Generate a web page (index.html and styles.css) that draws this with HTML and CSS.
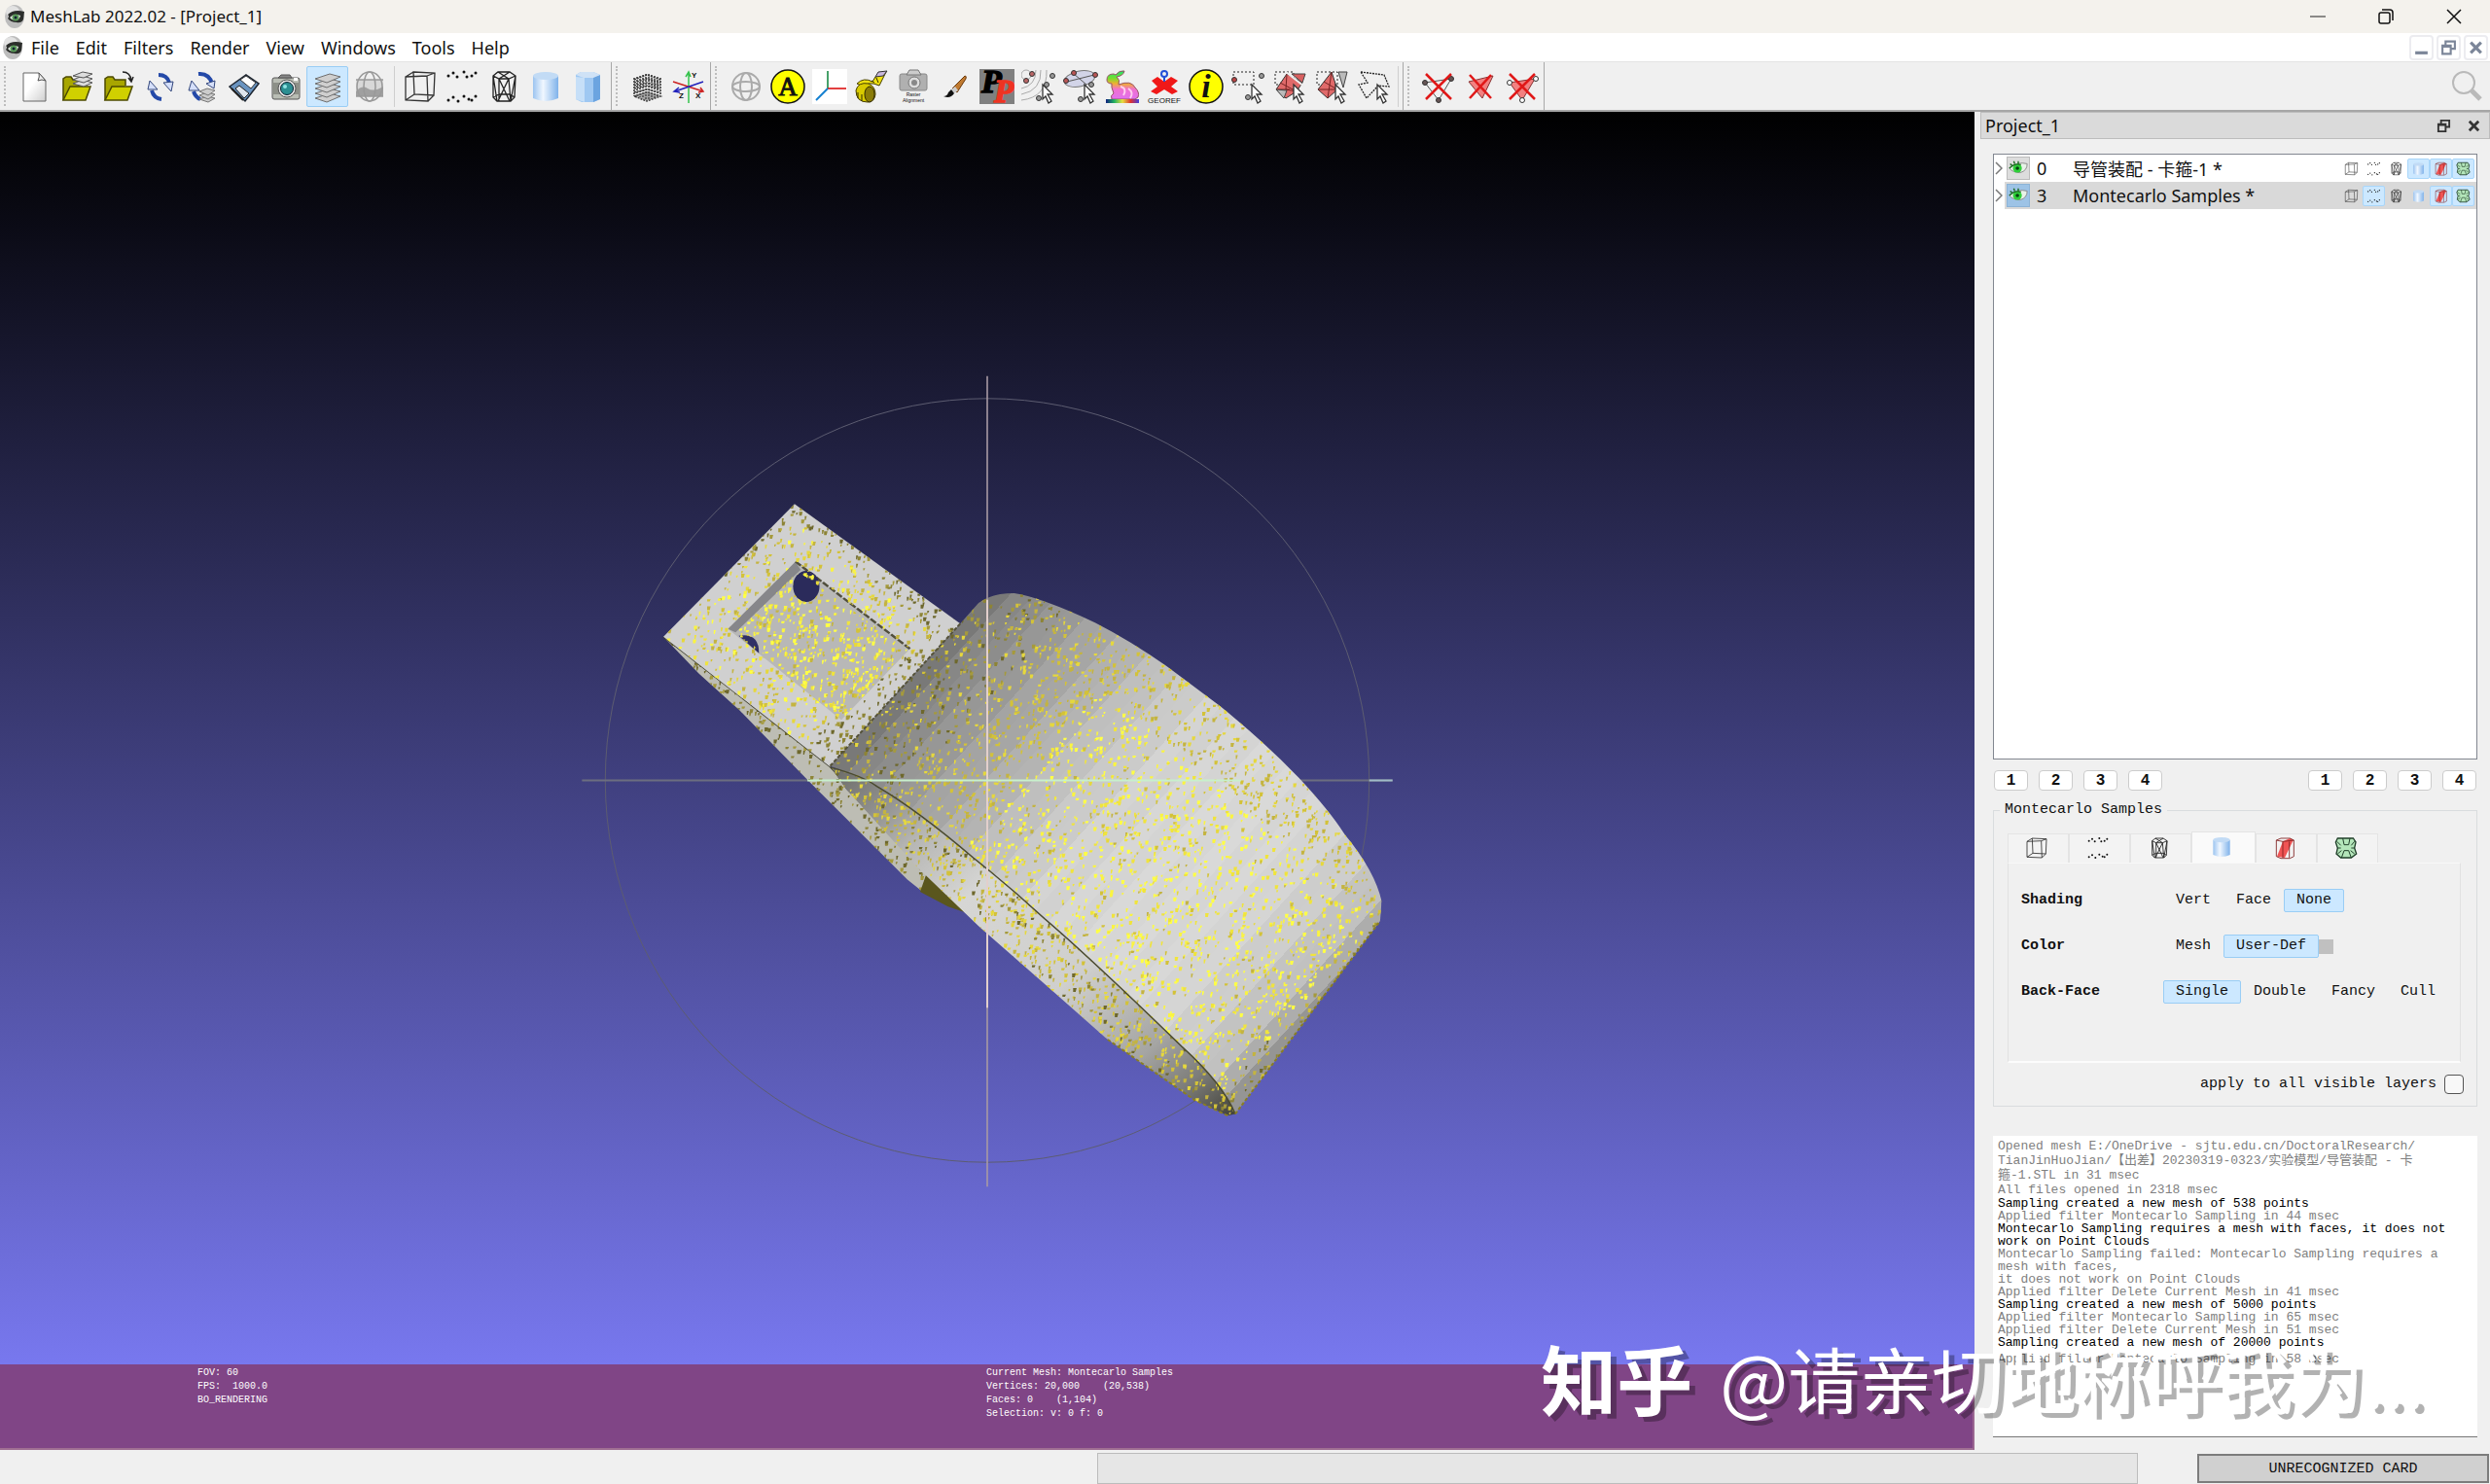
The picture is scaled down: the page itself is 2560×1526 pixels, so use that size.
FILE: index.html
```html
<!DOCTYPE html>
<html lang="en">
<head>
<meta charset="utf-8">
<title>MeshLab 2022.02 - [Project_1]</title>
<link rel="stylesheet" href="styles.css">
</head>
<body>
<svg class="sprite" width="0" height="0" aria-hidden="true">
  <defs>
    <linearGradient id="cyl"><stop offset="0" stop-color="#9cc4f0"/><stop offset=".4" stop-color="#f0f7ff"/><stop offset="1" stop-color="#7fb2ea"/></linearGradient>
    <linearGradient id="paper" x2="1" y2="1"><stop offset=".4" stop-color="#fff"/><stop offset="1" stop-color="#cfcfcf"/></linearGradient>
    <linearGradient id="rainbow"><stop offset="0" stop-color="#102080"/><stop offset=".25" stop-color="#20b060"/><stop offset=".5" stop-color="#e8e040"/><stop offset=".75" stop-color="#e03030"/><stop offset="1" stop-color="#4040e0"/></linearGradient>
    <linearGradient id="bunnyfill" x2="0" y2="1"><stop offset="0" stop-color="#20e070"/><stop offset=".25" stop-color="#70e030"/><stop offset=".45" stop-color="#f0b030"/><stop offset=".65" stop-color="#f070d0"/><stop offset="1" stop-color="#e070f0"/></linearGradient>
    <symbol id="i-logo" viewBox="0 0 22 24"><ellipse cx="11" cy="12" rx="10" ry="12" fill="#bdbdbd"/><ellipse cx="9" cy="7" rx="7" ry="6" fill="#e2e2e2"/><path d="M4 10Q10 4 21 7L20 15Q18 19 13 18Q7 18 4 14Q6 12 4 10Z" fill="#2b2e2b"/><path d="M6 13Q10 8 17 11Q16 16 11 16Q8 16 6 13Z" fill="#dde5dd"/><circle cx="12" cy="13" r="3.500" fill="#5a9a58"/><circle cx="12" cy="13" r="1.500" fill="#123"/></symbol>
    <symbol id="i-new" viewBox="0 0 36 36"><path d="M6 4H22L29 12V33H6Z" fill="url(#paper)" stroke="#666"/><path d="M22 4L29 12Q25 10 21 12Q23 8 22 4Z" fill="#eee" stroke="#555"/></symbol>
    <symbol id="i-folder" viewBox="0 0 36 36"><path d="M4 32V10L7 8H12L14 11H25V17" fill="#a8a600" stroke="#4c4a00" stroke-width="1.500"/><path d="M4 32L11 18H32L27 32Z" fill="#d0d000" stroke="#4c4a00" stroke-width="1.500"/></symbol>
    <symbol id="i-openproj" viewBox="0 0 36 36"><use href="#i-folder"/><g fill="#ddd" stroke="#555"><path d="M14 15L24 11L34 14L25 18Z"/><path d="M14 11L24 7L34 10L25 14Z"/><path d="M14 7L24 3L34 5L25 9Z"/></g></symbol>
    <symbol id="i-open" viewBox="0 0 36 36"><use href="#i-folder"/><path d="M22 3Q30 3 31 12M28 9L31 13L33 8" fill="none" stroke="#222" stroke-width="1.500"/></symbol>
    <symbol id="i-reload" viewBox="0 0 36 36"><path d="M16 6Q25 6 27 14M19 31Q11 30 9 22" fill="none" stroke="#2449a8" stroke-width="4"/><g fill="#d5dffa" stroke="#33477c"><path d="M5 21L7 12L15 21Z"/><path d="M31 13L29 23L21 14Z"/></g></symbol>
    <symbol id="i-reloadall" viewBox="0 0 36 36"><path d="M14 5Q25 4 28 15M16 31Q11 29 9 23" fill="none" stroke="#2449a8" stroke-width="4"/><g fill="#d5dffa" stroke="#33477c"><path d="M4 22L7 12L15 22Z"/><path d="M31 12L30 20L22 15Z"/></g><g fill="#ccc" stroke="#777"><path d="M15 31L23 28L31 30L24 34Z"/><path d="M15 27L23 24L31 26L24 31Z"/><path d="M15 23L23 20L31 22L24 27Z"/></g></symbol>
    <symbol id="i-save" viewBox="0 0 36 36"><path d="M3 18L20 6L33 15L19 33Z" fill="#6a94c0" stroke="#1d2530" stroke-width="1.500"/><path d="M14 11L20 7L30 14L25 20Z" fill="#fff" stroke="#333"/><path d="M9 20L13 17L23 25L18 30Z" fill="#dfe6ee" stroke="#222"/><path d="M5 20L17 32" stroke="#222" stroke-width="2"/></symbol>
    <symbol id="i-camera" viewBox="0 0 36 36"><rect x="4" y="9" width="28" height="22" rx="2" fill="#b9bdb4" stroke="#555"/><path d="M10 9L13 6H22L24 9Z" fill="#888" stroke="#555"/><rect x="4" y="14" width="28" height="12" fill="#8d9088"/><circle cx="19" cy="20" r="9" fill="#e5e5e5" stroke="#555"/><circle cx="19" cy="20" r="6.500" fill="#2c8f92" stroke="#123"/><circle cx="17" cy="18" r="2" fill="#8fe3e3"/><rect x="26" y="9" width="4" height="3" fill="#fff"/></symbol>
    <symbol id="i-layers" viewBox="0 0 36 36"><g fill="#cfcfcf" stroke="#6f6f6f"><path d="M5 30L20 25L31 28L17 34Z"/><path d="M5 25L20 20L31 23L17 29Z"/><path d="M5 20L20 15L31 18L17 24Z"/><path d="M5 15L20 10L31 13L17 19Z"/><path d="M5 10L20 5L31 8L17 14Z"/></g></symbol>
    <symbol id="i-raster" viewBox="0 0 36 36"><path d="M4 11H32V28H4Z" fill="#d8d8d8"/><path d="M4 23Q10 16 16 20T32 18V28H4Z" fill="#a0a0a0"/><g fill="none" stroke="#999" stroke-width="1.500"><ellipse cx="18" cy="18" rx="13" ry="15"/><ellipse cx="18" cy="18" rx="6" ry="15"/><path d="M4 11H32M4 28H32"/></g></symbol>
    <symbol id="i-cube" viewBox="0 0 36 36"><g fill="none" stroke="#333" stroke-width="1.300"><path d="M3 8L25 7L26 33L3 32ZM11 3L33 4L32 27L12 26ZM3 8L11 3M25 7L33 4M26 33L32 27M3 32L12 26"/></g></symbol>
    <symbol id="i-points" viewBox="0 0 36 36"><g fill="#111"><circle cx="4" cy="7" r="1.500"/><circle cx="9" cy="4" r="1.500"/><circle cx="13" cy="8" r="1.500"/><circle cx="20" cy="3" r="1.500"/><circle cx="23" cy="8" r="1.500"/><circle cx="28" cy="7" r="1.500"/><circle cx="32" cy="4" r="1.500"/><circle cx="4" cy="32" r="1.500"/><circle cx="9" cy="29" r="1.500"/><circle cx="14" cy="33" r="1.500"/><circle cx="20" cy="28" r="1.500"/><circle cx="25" cy="31" r="1.500"/><circle cx="28" cy="32" r="1.500"/><circle cx="32" cy="28" r="1.500"/></g></symbol>
    <symbol id="i-wire" viewBox="0 0 36 36"><g fill="none" stroke="#222" stroke-width="1.300"><path d="M7 7L12 3L24 3L30 7L29 29L25 33L11 33L7 29ZM7 7L13 10L23 10L30 7M7 29L13 26L24 26L29 29M13 10V33M23 10L25 33M13 10L24 33M23 10L12 33M7 7L11 33M30 7L25 33M12 3L23 10M24 3L13 10"/></g></symbol>
    <symbol id="i-smooth" viewBox="0 0 36 36"><path d="M5 7V30Q18 36 31 30V7Z" fill="url(#cyl)"/><ellipse cx="18" cy="7" rx="13" ry="4" fill="#c2dbf5"/></symbol>
    <symbol id="i-flat" viewBox="0 0 36 36"><path d="M6 6L11 3H24L31 6V31L24 34H12L6 31Z" fill="#9fc8f2"/><path d="M6 8L15 9V34L6 31Z" fill="#c6dff8"/><path d="M24 8L31 6V31L24 34Z" fill="#6ba4e0"/><path d="M6 6L11 3H24L31 6L24 9H14Z" fill="#cfe2f6"/></symbol>
    <symbol id="i-redcyl" viewBox="0 0 36 36"><path d="M15 8L26 3L31 6L18 33L6 31Z" fill="#f05454"/><g fill="none" stroke="#802020" stroke-width="1.300"><path d="M5 6L12 3H26L32 6V31L26 34H12L5 31ZM5 6L15 8L32 6M15 8V33M25 8V33"/></g></symbol>
    <symbol id="i-green" viewBox="0 0 36 36"><path d="M5 3H29L33 9L31 18L34 27L26 33H10L3 27L5 18L2 9Z" fill="#b4e6ba" stroke="#21402a" stroke-width="2"/><path d="M13 3L15 13H22L24 3M11 33L15 22H22L26 33M5 18H10M26 18H31M4 8L10 14M31 8L26 14M5 27L11 22M31 27L25 22" fill="none" stroke="#21402a" stroke-width="1.500"/></symbol>
    <symbol id="i-grid" viewBox="0 0 36 36"><g fill="none" stroke="#333" stroke-width="1.500" stroke-dasharray="2 1"><path d="M5 9V28M8 8V28M11 7V29M14 6V30M17 5V32M20 5V32M23 6V31M26 7V30M29 8V28M32 9V27M5 11L18 6L32 11M5 14L18 10L32 14M5 17L18 14L32 17M5 20L18 17L32 20M5 24L18 21L32 24M5 28L18 24L32 28L18 33Z"/></g><path d="M5 27L18 23L32 27L18 33Z" fill="#6668"/></symbol>
    <symbol id="i-axes" viewBox="0 0 36 36"><g fill="none" stroke-width="1.500"><path d="M18 35V4M15 8L18 3L20 8" stroke="#35c24c"/><path d="M2 13L33 23M28 24L33 23L30 19" stroke="#c22"/><path d="M33 13L4 23M8 19L3 23L9 24" stroke="#22b"/></g><g font-family="Liberation Sans" font-weight="bold" font-size="8" fill="#111"><text x="21" y="9">Y</text><text x="8" y="30">Z</text><text x="25" y="30">X</text></g></symbol>
    <symbol id="i-globe" viewBox="0 0 36 36"><g fill="none" stroke="#aaa" stroke-width="2"><circle cx="18" cy="18" r="14"/><ellipse cx="18" cy="18" rx="6" ry="14"/><ellipse cx="18" cy="18" rx="14" ry="5"/></g></symbol>
    <symbol id="i-a" viewBox="0 0 36 36"><circle cx="18" cy="18" r="17" fill="#ff0" stroke="#111" stroke-width="1.500"/><text x="18" y="27" text-anchor="middle" font-family="Liberation Serif" font-size="27" fill="#111" stroke="#111">A</text></symbol>
    <symbol id="i-triad" viewBox="0 0 36 36"><path d="M0 0H36V36H0Z" fill="#fff"/><g fill="none" stroke-width="1.600"><path d="M16 2V20" stroke="#198a45"/><path d="M16 20H35" stroke="#d11"/><path d="M16 20L4 32" stroke="#1580d0" stroke-width="2"/></g></symbol>
    <symbol id="i-tape" viewBox="0 0 36 36"><path d="M22 8L33 3L26 17Q15 12 10 18L3 15Q10 8 19 13Z" fill="#eee010" stroke="#443c00"/><path d="M25 3L34 2L30 7L22 8Z" fill="#c9b8dc" stroke="#333"/><path d="M2 22Q4 13 15 15Q22 18 22 26Q21 34 14 34Q2 34 2 22Z" fill="#d8ca00" stroke="#443c00"/><ellipse cx="16" cy="26" rx="5" ry="8" fill="#8a7c08" stroke="#332c00"/><path d="M4 24V30M8 26V33M18 12L21 14M23 9L25 14" stroke="#332c00"/></symbol>
    <symbol id="i-align" viewBox="0 0 36 36"><rect x="4" y="5" width="28" height="17" rx="2" fill="#b0b0b0" stroke="#888"/><path d="M11 6L14 1H23L26 6Z" fill="#ccc" stroke="#777"/><circle cx="19" cy="14" r="6" fill="#ddd" stroke="#777"/><circle cx="19" cy="14" r="3" fill="#888"/><g font-family="Liberation Sans" font-size="5" text-anchor="middle" fill="#111"><text x="18" y="28">Raster</text><text x="18" y="34">Alignment</text></g></symbol>
    <symbol id="i-brush" viewBox="0 0 36 36"><path d="M15 20L28 7Q30 7 29 10L20 24Z" fill="#c07a30" stroke="#6b3c10"/><path d="M14 21L18 18L21 22L17 25Z" fill="#ccc"/><path d="M17 25Q13 31 6 28Q10 28 11 24L14 21Z" fill="#111"/></symbol>
    <symbol id="i-pp" viewBox="0 0 36 36"><path d="M0 0H36V36H0Z" fill="#808080"/><g font-family="Liberation Serif" font-style="italic" font-weight="bold" stroke-width="1.500"><text x="2" y="24" font-size="34" fill="#000" stroke="#000">P</text><text x="15" y="34" font-size="33" fill="#e32" stroke="#e32">P</text></g></symbol>
    <symbol id="i-arrow" viewBox="0 0 36 36"><path d="M22 16L32 26H27L31 33L28 35L25 28L22 31Z" fill="#fff" stroke="#333" stroke-width="1.300"/></symbol>
    <symbol id="i-ptsel" viewBox="0 0 36 36"><g fill="none" stroke="#aaa"><circle cx="5" cy="6" r="5"/><path d="M15 1Q15 17 0 20M20 1Q21 22 0 26M26 1Q27 29 0 32"/></g><g stroke="#333" fill="#999"><circle cx="32" cy="7" r="2.500"/><circle cx="26" cy="16" r="2.500"/><circle cx="18" cy="30" r="2.500"/><circle cx="11" cy="5" r="2.500" fill="#b66"/><circle cx="5" cy="12" r="2.500" fill="#b66"/></g><use href="#i-arrow"/></symbol>
    <symbol id="i-planesel" viewBox="0 0 36 36"><ellipse cx="17" cy="10" rx="16" ry="8" transform="rotate(-12 17 10)" fill="#d2d4e8" stroke="#777"/><path d="M4 13L32 6M11 5L24 16" stroke="#555"/><g stroke="#333" fill="#999"><circle cx="29" cy="16" r="2.500"/><circle cx="18" cy="31" r="2.500"/><g fill="#b55"><circle cx="11" cy="4" r="2.500"/><circle cx="33" cy="6" r="2.500"/><circle cx="3" cy="12" r="2.500"/></g></g><use href="#i-arrow"/></symbol>
    <symbol id="i-bunny" viewBox="0 0 36 36"><path d="M2 11Q2 5 9 5L11 6Q15 1 20 2Q19 7 12 8Q16 11 14 16Q27 11 31 19Q36 24 34 29L31 31H7Q5 27 9 25Q6 18 7 15Q2 15 2 11Z" fill="url(#bunnyfill)" stroke="#956"/><path d="M16 18Q23 20 19 27M24 20Q30 24 26 30" fill="none" stroke="#ffd0f0" stroke-width="2"/><path d="M1 31H35V35H1Z" fill="url(#rainbow)"/></symbol>
    <symbol id="i-georef" viewBox="0 0 36 36"><path d="M5 12L11 8L18 13L25 8L32 12L25 18L32 23L26 26L18 21L10 26L4 23L11 18Z" fill="#f01818"/><circle cx="18" cy="5" r="3" fill="none" stroke="#2450d8" stroke-width="2"/><path d="M18 7V13" stroke="#2450d8" stroke-width="2"/><text x="18" y="35" text-anchor="middle" font-family="Liberation Sans" font-size="8" fill="#111">GEOREF</text></symbol>
    <symbol id="i-info" viewBox="0 0 36 36"><circle cx="18" cy="18" r="17" fill="#ff0" stroke="#111" stroke-width="1.500"/><text x="18" y="29" text-anchor="middle" font-family="Liberation Serif" font-size="34" font-style="italic" font-weight="bold" fill="#111">i</text></symbol>
    <symbol id="i-vsel" viewBox="0 0 36 36"><path d="M3 3H24V16H3Z" fill="none" stroke="#222" stroke-dasharray="2 2"/><g stroke="#333" fill="#999"><circle cx="32" cy="7" r="2.500"/><circle cx="18" cy="29" r="2.500"/><circle cx="4" cy="11" r="2.500" fill="#b44"/></g><use href="#i-arrow"/></symbol>
    <symbol id="i-fsel" viewBox="0 0 36 36"><path d="M3 3H22V16H3Z" fill="none" stroke="#222" stroke-dasharray="2 2"/><path d="M4 21L15 5L31 14L25 23L14 30Z" fill="#e06a6a" stroke="#333"/><path d="M8 14L25 23M15 5L14 21L25 23M4 21H18" fill="none" stroke="#722"/><path d="M4 21L15 22L12 30Z" fill="#bbb" stroke="#444"/><path d="M20 5H34L31 14Z" fill="#d96060" stroke="#444"/><path d="M14 3L33 18" stroke="#eee" stroke-width="2"/><use href="#i-arrow"/></symbol>
    <symbol id="i-csel" viewBox="0 0 36 36"><path d="M3 3H24V16H3Z" fill="none" stroke="#222" stroke-dasharray="2 2"/><path d="M4 21L18 3L24 21L14 30Z" fill="#e06a6a" stroke="#333"/><path d="M10 13L24 21L4 21M18 3L14 30" fill="none" stroke="#722"/><path d="M25 3H34L30 19Z" fill="#bbb" stroke="#444"/><use href="#i-arrow"/></symbol>
    <symbol id="i-poly" viewBox="0 0 36 36"><path d="M5 3L29 6L34 18L23 17L11 30L3 16L12 14Z" fill="none" stroke="#222" stroke-width="1.300" stroke-dasharray="2 1"/><use href="#i-arrow"/></symbol>
    <symbol id="i-cross" viewBox="0 0 36 36"><path d="M5 5L31 31M31 5L5 31" stroke="#e01818" stroke-width="2.500"/></symbol>
    <symbol id="i-delv" viewBox="0 0 36 36"><path d="M4 14L31 10L18 32Z" fill="none" stroke="#555"/><g fill="#655" stroke="#333"><circle cx="4" cy="14" r="2.500"/><circle cx="31" cy="10" r="2.500"/><circle cx="18" cy="32" r="2.500"/></g><use href="#i-cross"/></symbol>
    <symbol id="i-delf" viewBox="0 0 36 36"><path d="M6 13L31 7L20 30Z" fill="#f28080" stroke="#833"/><path d="M7 6L29 30M29 6L7 30" stroke="#e01818" stroke-width="2.500"/></symbol>
    <symbol id="i-delfv" viewBox="0 0 36 36"><path d="M5 14L31 10L18 32Z" fill="#f28080" stroke="#833"/><g fill="#fff" stroke="#333"><circle cx="5" cy="14" r="2.500"/><circle cx="32" cy="10" r="2.500"/><circle cx="18" cy="32" r="2.500"/></g><use href="#i-cross"/></symbol>
    <symbol id="i-eye" viewBox="0 0 24 24"><path d="M2 12Q11 4 22 7Q22 15 14 17Q6 17 2 12Z" fill="#e8f2e8" stroke="#888"/><circle cx="11" cy="12" r="5" fill="#2fd03a"/><circle cx="11" cy="12" r="2" fill="#064010"/><path d="M2 12Q8 6 15 8M5 9L3 7M8 7L7 4M12 7V4" fill="none" stroke="#1a6a20" stroke-width="1.500"/></symbol>
    <symbol id="i-float" viewBox="0 0 16 16"><path d="M5 5V2H14V9H11M2 6H10V14H2Z" fill="none" stroke="currentColor" stroke-width="2"/><path d="M2 7H10" stroke="currentColor" stroke-width="2"/></symbol>
    <symbol id="i-close" viewBox="0 0 16 16"><path d="M3 3L13 13M13 3L3 13" stroke="currentColor" stroke-width="3"/></symbol>
  </defs>
</svg>

<header class="titlebar">
  <svg class="logo"><use href="#i-logo"/></svg>
  <h1>MeshLab 2022.02 - [Project_1]</h1>
  <div class="window-buttons">
    <button aria-label="Minimize"><svg viewBox="0 0 16 16"><path d="M0 8H16" stroke="#222"/></svg></button>
    <button aria-label="Restore"><svg viewBox="0 0 16 16"><rect x="1" y="4" width="11" height="11" rx="2" fill="none" stroke="#111" stroke-width="1.500"/><path d="M4 1H12Q15 1 15 4V12" fill="none" stroke="#111" stroke-width="1.500"/></svg></button>
    <button aria-label="Close"><svg viewBox="0 0 16 16"><path d="M1 1L15 15M15 1L1 15" stroke="#111" stroke-width="1.500"/></svg></button>
  </div>
</header>

<nav class="menubar">
  <svg class="logo"><use href="#i-logo"/></svg>
  <div class="menus"><button>File</button><button>Edit</button><button>Filters</button><button>Render</button><button>View</button><button>Windows</button><button>Tools</button><button>Help</button></div>
  <div class="mdi-buttons">
    <button aria-label="Minimize project"><svg viewBox="0 0 16 16"><path d="M2 13H14" stroke="currentColor" stroke-width="3"/></svg></button>
    <button aria-label="Restore project"><svg><use href="#i-float"/></svg></button>
    <button aria-label="Close project"><svg><use href="#i-close"/></svg></button>
  </div>
</nav>

<div class="toolbars">
  <div class="toolbar">
    <button aria-label="New project"><svg><use href="#i-new"/></svg></button>
    <button aria-label="Open project"><svg><use href="#i-openproj"/></svg></button>
    <button aria-label="Import mesh"><svg><use href="#i-open"/></svg></button>
    <button aria-label="Reload"><svg><use href="#i-reload"/></svg></button>
    <button aria-label="Reload all"><svg><use href="#i-reloadall"/></svg></button>
    <button aria-label="Export mesh"><svg><use href="#i-save"/></svg></button>
    <button aria-label="Snapshot"><svg><use href="#i-camera"/></svg></button>
    <button aria-label="Show layers" class="on"><svg><use href="#i-layers"/></svg></button>
    <button aria-label="Show raster"><svg><use href="#i-raster"/></svg></button>
    <span class="separator"></span>
    <button aria-label="Bounding box"><svg><use href="#i-cube"/></svg></button>
    <button aria-label="Points"><svg><use href="#i-points"/></svg></button>
    <button aria-label="Wireframe"><svg><use href="#i-wire"/></svg></button>
    <button aria-label="Smooth"><svg><use href="#i-smooth"/></svg></button>
    <button aria-label="Flat"><svg><use href="#i-flat"/></svg></button>
  </div>
  <div class="toolbar compact">
    <button aria-label="Grid"><svg><use href="#i-grid"/></svg></button>
    <button aria-label="Axes"><svg><use href="#i-axes"/></svg></button>
  </div>
  <div class="toolbar">
    <button aria-label="Trackball"><svg><use href="#i-globe"/></svg></button>
    <button aria-label="Align"><svg><use href="#i-a"/></svg></button>
    <button aria-label="Manipulators"><svg><use href="#i-triad"/></svg></button>
    <button aria-label="Measure"><svg><use href="#i-tape"/></svg></button>
    <button aria-label="Raster alignment"><svg><use href="#i-align"/></svg></button>
    <button aria-label="Paint"><svg><use href="#i-brush"/></svg></button>
    <button aria-label="Pick points"><svg><use href="#i-pp"/></svg></button>
    <button aria-label="Select points"><svg><use href="#i-ptsel"/></svg></button>
    <button aria-label="Select on plane"><svg><use href="#i-planesel"/></svg></button>
    <button aria-label="Quality mapper"><svg><use href="#i-bunny"/></svg></button>
    <button aria-label="Georeference"><svg><use href="#i-georef"/></svg></button>
    <button aria-label="Information"><svg><use href="#i-info"/></svg></button>
    <button aria-label="Select vertices"><svg><use href="#i-vsel"/></svg></button>
    <button aria-label="Select faces"><svg><use href="#i-fsel"/></svg></button>
    <button aria-label="Select connected"><svg><use href="#i-csel"/></svg></button>
    <button aria-label="Select by polyline"><svg><use href="#i-poly"/></svg></button>
    <span class="separator"></span>
  </div>
  <div class="toolbar compact">
    <button aria-label="Delete vertices"><svg><use href="#i-delv"/></svg></button>
    <button aria-label="Delete faces"><svg><use href="#i-delf"/></svg></button>
    <button aria-label="Delete faces and vertices"><svg><use href="#i-delfv"/></svg></button>
  </div>
  <button class="search" aria-label="Search"><svg viewBox="0 0 34 34"><circle cx="14" cy="14" r="11" fill="none" stroke="#b9b9b9" stroke-width="2"/><path d="M22 22L31 31" stroke="#b9b9b9" stroke-width="5"/></svg></button>
</div>

<main class="workspace">
  <section class="viewport">
    <svg class="scene" viewBox="0 0 2030 1377" aria-label="3D view">
      <defs>
        <linearGradient id="facets" gradientUnits="userSpaceOnUse" x1="588" y1="456" x2="1473" y2="1143"></linearGradient>
        <linearGradient id="inner" gradientUnits="userSpaceOnUse" x1="420" y1="700" x2="1200" y2="1490"><stop offset="0" stop-color="#6e6e6a"/><stop offset=".1" stop-color="#8e8e8c"/><stop offset=".2" stop-color="#b6b6b4"/><stop offset=".35" stop-color="#d6d6d4"/><stop offset=".6" stop-color="#cfcfcd"/><stop offset=".8" stop-color="#a5a5a3"/><stop offset=".9" stop-color="#7d7d7a"/><stop offset="1" stop-color="#44443c"/></linearGradient>
        <clipPath id="c-drum"><path d="M408 688L664 360L700 312Q725 290 770 290Q820 298 930 358Q1000 400 1070 458L1175 550Q1260 630 1330 715Q1390 790 1420 845Q1480 930 1493 1000L1490 1045L1205 1490Q1180 1420 1100 1335Q920 1130 830 1040Q760 965 690 900Q580 790 500 735Q440 700 408 688Z"/></clipPath>
        <clipPath id="c-inner"><path d="M410 692Q470 710 500 735Q580 790 690 900Q760 965 830 1040Q920 1130 1100 1335Q1180 1420 1205 1490L1190 1494L1125 1458L950 1315L820 1180L700 1057L580 922L440 742Z"/></clipPath>
        <clipPath id="c-side"><path d="M80 390L408 688L440 742L580 905L660 1005L590 978L560 950L365 722L230 560L150 475Z"/></clipPath>
        <clipPath id="c-plate"><path clip-rule="evenodd" d="M338 84L664 360L408 690L80 390ZM340 217L207 372L430 582L565 418Z"/></clipPath>
        <clipPath id="c-floor"><path clip-rule="evenodd" d="M345 240L560 420L430 582L225 378ZM335 274A26 36 0 0 0 387 274A26 36 0 0 0 335 274ZM228 388Q268 380 268 428Z"/></clipPath>
      </defs>
      <g fill="none" stroke-width="1">
        <circle cx="1015" cy="688" r="393" stroke="#5c5c70"/>
        <path d="M598 688H1432" stroke="#6c6e80" stroke-width="2"/>
        <path d="M1408 688H1432" stroke="#a0bcc8" stroke-width="2"/>
      </g>
      <svg x="640" y="366" width="820" height="700" viewBox="0 0 1568 1568" preserveAspectRatio="none">
        <g clip-path="url(#c-side)"><path d="M80 380H720V1070H80Z" fill="#bdbdb4"/><g data-scatter="side"></g></g>
        <path d="M598 935L685 1030L640 1012L585 978Z" fill="#5a561e"/>
        <path d="M80 390L408 690L600 930" fill="none" stroke="#3a3a2a" stroke-width="3"/>
        <path d="M338 84L664 360L408 690L80 390Z" fill="#d0d0d0"/>
        <path d="M340 217L565 418L430 582L207 372Z" fill="#b8b8b7"/>
        <path d="M340 217L207 372L222 380L350 236Z" fill="#86868a"/>
        <path d="M340 217L565 418" stroke="#504e3c" stroke-width="5" stroke-dasharray="14 4"/>
        <ellipse cx="361" cy="274" rx="26" ry="36" fill="#2b2b5b"/>
        <path d="M228 388Q268 380 268 428Z" fill="#303066"/>
        <g clip-path="url(#c-plate)" data-scatter="plate"></g>
        <g clip-path="url(#c-floor)" data-scatter="floor"></g>
        <g clip-path="url(#c-inner)"><path d="M400 680H1220V1500H400Z" fill="url(#inner)"/><g data-scatter="inner"></g></g>
        <g clip-path="url(#c-drum)"><path d="M400 280H1500V1500H400Z" fill="url(#facets)"/><g data-scatter="drum"></g></g>
        <path d="M410 692Q470 710 500 735Q580 790 690 900Q760 965 830 1040Q920 1130 1100 1335Q1180 1420 1205 1490" fill="none" stroke="#4b4b30" stroke-width="3"/>
        <path d="M408 688L664 360" stroke="#55523a" stroke-width="4" stroke-dasharray="8 4"/>
        <path d="M1190 1494L1125 1458L950 1315M1205 1490L1490 1045" fill="none" stroke="#8a7e20" stroke-width="4" stroke-dasharray="7 5"/>
      </svg>
      <path d="M1015 272V1106" stroke="#a89aa4" stroke-width="2" opacity=".8"/>
      <path d="M1015 502V922" stroke="#e2cfcc" stroke-width="2"/>
      <path d="M830 688H1276" stroke="#c8f0cc" stroke-width="2"/>
    </svg>
    <div class="hud">
      <div>FOV: 60<br>FPS:&nbsp; 1000.0<br>BO_RENDERING</div>
      <div>Current Mesh: Montecarlo Samples<br>Vertices: 20,000 &nbsp;&nbsp; (20,538)<br>Faces: 0 &nbsp;&nbsp; (1,104)<br>Selection: v: 0 f: 0</div>
    </div>
  </section>

  <aside class="dock">
    <div class="dock-title"><h2>Project_1</h2>
      <button aria-label="Float panel"><svg><use href="#i-float"/></svg></button>
      <button aria-label="Close panel"><svg><use href="#i-close"/></svg></button>
    </div>
    <div class="dock-body">
      <ul class="layers">
        <li><svg class="chevron" viewBox="0 0 8 14"><path d="M1 1L7 7L1 13" fill="none" stroke="#777" stroke-width="1.500"/></svg><svg class="eye"><use href="#i-eye"/></svg><span class="id">0</span><span class="name">导管装配 - 卡箍-1 *</span>
          <span class="modes"><button aria-label="Box"><svg><use href="#i-cube"/></svg></button><button aria-label="Points"><svg><use href="#i-points"/></svg></button><button aria-label="Wire"><svg><use href="#i-wire"/></svg></button><button class="on" aria-label="Solid"><svg><use href="#i-smooth"/></svg></button><button class="on" aria-label="Selection"><svg><use href="#i-redcyl"/></svg></button><button class="on" aria-label="Edges"><svg><use href="#i-green"/></svg></button></span></li>
        <li class="current"><svg class="chevron" viewBox="0 0 8 14"><path d="M1 1L7 7L1 13" fill="none" stroke="#777" stroke-width="1.500"/></svg><svg class="eye"><use href="#i-eye"/></svg><span class="id">3</span><span class="name">Montecarlo Samples *</span>
          <span class="modes"><button aria-label="Box"><svg><use href="#i-cube"/></svg></button><button class="on" aria-label="Points"><svg><use href="#i-points"/></svg></button><button aria-label="Wire"><svg><use href="#i-wire"/></svg></button><button aria-label="Solid"><svg><use href="#i-smooth"/></svg></button><button class="on" aria-label="Selection"><svg><use href="#i-redcyl"/></svg></button><button class="on" aria-label="Edges"><svg><use href="#i-green"/></svg></button></span></li>
      </ul>
      <div class="slots">
        <div><button>1</button><button>2</button><button>3</button><button>4</button></div>
        <div><button>1</button><button>2</button><button>3</button><button>4</button></div>
      </div>
      <fieldset class="render">
        <legend>Montecarlo Samples</legend>
        <div class="tabs">
          <button aria-label="Box"><svg><use href="#i-cube"/></svg></button><button aria-label="Points"><svg><use href="#i-points"/></svg></button><button aria-label="Wire"><svg><use href="#i-wire"/></svg></button><button class="on" aria-label="Solid"><svg><use href="#i-smooth"/></svg></button><button aria-label="Selection"><svg><use href="#i-redcyl"/></svg></button><button aria-label="Edges"><svg><use href="#i-green"/></svg></button>
        </div>
        <div class="options">
          <div class="option"><b>Shading</b><button>Vert</button><button>Face</button><button class="on">None</button></div>
          <div class="option"><b>Color</b><button>Mesh</button><button class="on">User-Def</button><span class="swatch"></span></div>
          <div class="option"><b>Back-Face</b><button class="on">Single</button><button>Double</button><button>Fancy</button><button>Cull</button></div>
        </div>
        <label class="apply">apply to all visible layers <input type="checkbox"></label>
      </fieldset>
      <div class="log">
        <p class="tall">Opened mesh E:/OneDrive - sjtu.edu.cn/DoctoralResearch/</p>
        <p class="tall">TianJinHuoJian/【出差】20230319-0323/实验模型/导管装配 - 卡</p>
        <p class="tall">箍-1.STL in 31 msec</p>
        <p class="tall">All files opened in 2318 msec</p>
        <p class="note">Sampling created a new mesh of 538 points</p>
        <p>Applied filter Montecarlo Sampling in 44 msec</p>
        <p class="note">Montecarlo Sampling requires a mesh with faces, it does not<br>work on Point Clouds</p>
        <p>Montecarlo Sampling failed: Montecarlo Sampling requires a<br>mesh with faces,<br>it does not work on Point Clouds</p>
        <p>Applied filter Delete Current Mesh in 41 msec</p>
        <p class="note">Sampling created a new mesh of 5000 points</p>
        <p>Applied filter Montecarlo Sampling in 65 msec</p>
        <p>Applied filter Delete Current Mesh in 51 msec</p>
        <p class="note">Sampling created a new mesh of 20000 points</p>
        <p class="last">Applied filter Montecarlo Sampling in 58 msec</p>
      </div>
    </div>
  </aside>
</main>

<footer class="statusbar">
  <div class="progress"></div>
  <button class="card">UNRECOGNIZED CARD</button>
</footer>

<div class="watermark"><b>知乎</b><span>@请亲切地称呼我为...</span></div>
<script src="scene.js"></script>
</body>
</html>
```
FILE: styles.css
```css
* { box-sizing: border-box; }
body { margin: 0; min-height: 100vh; display: flex; flex-direction: column; position: relative; overflow-x: hidden; background: #f0f0f0; color: #111; font-family: "Noto Sans", "Noto Sans CJK SC", sans-serif; font-size: 18px; }
button { border: 0; margin: 0; padding: 0; background: none; font: inherit; color: inherit; }
button svg { display: block; width: 100%; height: 100%; }
h1, h2, p, ul { margin: 0; padding: 0; font-weight: normal; }
.sprite { position: absolute; }
.logo { width: 22px; height: 24px; flex: none; }

.titlebar { display: flex; align-items: center; height: 34px; padding-left: 4px; background: #f4f2ed; }
.titlebar h1 { flex: 1; margin-left: 5px; font-size: 17px; line-height: 24px; }
.window-buttons { display: flex; gap: 54px; margin-right: 29px; }
.window-buttons button { width: 16px; height: 16px; }

.menubar { display: flex; align-items: center; height: 30px; padding-left: 2px; background: #fff; border-bottom: 1px solid #e4e4e4; }
.menus { display: flex; gap: 1px; }
.menus button { padding: 0 8px; line-height: 24px; }
.mdi-buttons { display: flex; gap: 3px; margin-left: auto; margin-right: 2px; color: #7c8699; }
.mdi-buttons button { width: 25px; height: 26px; padding: 2px; border: 2px solid #ececf0; border-radius: 4px; }

.toolbars { display: flex; height: 51px; border-bottom: 2px solid #a6a6a6; background: #f0f0f0; }
.toolbar { position: relative; display: flex; align-items: center; padding: 0 3px 0 14px; border-right: 1px solid #a8a8a8; }
.toolbar.compact { padding-right: 1px; }
.toolbar:nth-child(3) { padding-right: 0; }
.toolbar::before { content: ""; position: absolute; left: 4px; top: 4px; bottom: 4px; border-left: 2px dotted #bdbdbd; }
.toolbar button { width: 43px; height: 42px; padding: 2px; border: 1px solid transparent; border-radius: 2px; }
.toolbar button.on { background: #cce8ff; border-color: #99cdf5; }
.toolbar svg { width: 36px; height: 36px; margin: 0 auto; }
.separator { width: 1px; height: 42px; margin: 0 4px; background: #cfcfcf; }
.search { width: 34px; height: 34px; margin: 7px 7px 0 auto; }

.workspace { flex: 1; display: flex; min-height: 0; }
.viewport { flex: 1; min-width: 0; position: relative; display: flex; flex-direction: column; justify-content: flex-end; background: linear-gradient(#000, #8080ff); }
.scene { position: absolute; inset: 0; width: 100%; height: 100%; }
.hud { position: relative; display: grid; grid-template-columns: 811px 1fr; height: 88px; padding: 2px 0 0 203px; background: #804586; border-bottom: 2px solid #a06f92; border-right: 2px solid #9a6690; color: #fff; font: 10px/14px "Liberation Mono", monospace; white-space: pre-wrap; }

.dock { width: 530px; padding-left: 6px; display: flex; flex-direction: column; }
.dock-title { display: flex; align-items: center; height: 28px; padding: 0 8px 0 4px; background: #dadada; border: 1px solid #bcbcbc; }
.dock-title h2 { flex: 1; font-size: 18px; line-height: 26px; }
.dock-title button { width: 15px; height: 15px; margin-left: 16px; color: #333; }
.dock-body { flex: 1; display: flex; flex-direction: column; padding: 15px 13px 13px; }
.layers { flex: 1; list-style: none; background: #fff; border: 1px solid #828790; }
.layers li { display: flex; align-items: center; height: 28px; padding: 0 2px 0 1px; }
.layers .current { background: linear-gradient(90deg, #fff 11px, #d9d9d9 11px); }
.chevron { width: 8px; height: 14px; }
.eye { width: 24px; height: 24px; margin: 0 7px 0 4px; background: #ddd; border: 1px solid #bbb; }
.current .eye { background: #9dc3e6; border-color: #8db3d6; }
.id { width: 37px; }
.name { flex: 1; white-space: nowrap; }
.modes { display: flex; }
.modes button { width: 23px; height: 21px; padding: 2px; border: 1px solid transparent; border-radius: 2px; }
.modes .on { background: #cce8ff; border-color: #a9d6fa; }

.slots, .slots div { display: flex; justify-content: space-between; gap: 11px; }
.slots { margin: 11px 1px 10px; }
.slots button { width: 35px; height: 21px; background: #fff; border: 1px solid #ccc; border-radius: 4px; font: bold 16px/18px "Liberation Mono", monospace; }

.render { min-width: 0; margin: 0 0 30px; padding: 12px 16px 12px 14px; border: 1px solid #d9dcde; font: 15px/20px "Liberation Mono", monospace; }
.render legend { margin-left: -8px; padding: 0 5px; height: 20px; }
.tabs { display: flex; align-items: flex-end; height: 32px; }
.tabs button { width: 63px; height: 30px; padding: 2px 4px 4px 0; background: #f3f3f3; border: 1px solid #e4e4e4; border-bottom: 0; }
.tabs button svg { width: 24px; height: 24px; margin: 0 auto; }
.tabs .on { width: 66px; height: 32px; background: #fafafa; }
.options { height: 206px; padding: 26px 0 0 13px; border: 1px solid #e2e2e2; border-top-color: #f8f8f8; border-bottom: 2px solid #fcfcfc; display: flex; flex-direction: column; gap: 23px; }
.option { display: flex; align-items: center; height: 24px; }
.option b { width: 146px; }
.option button { height: 24px; padding: 0 12px; border: 1px solid transparent; border-radius: 2px; }
.option .on { background: #cce8ff; border-color: #99cdf5; }
.swatch { width: 15px; height: 15px; background: #c0c0c0; }
.apply { display: flex; justify-content: flex-end; align-items: center; gap: 8px; height: 20px; margin: 12px -3px 0 0; }
.apply input { appearance: none; width: 20px; height: 20px; margin: 0; border: 1px solid #555; border-radius: 4px; background: #f8f8f8; }

.log { height: 310px; padding: 3px 0 0 5px; background: #fff; border-bottom: 1px solid #777; color: #808080; font: 13px/13px "Liberation Mono", "Noto Sans CJK SC", monospace; white-space: nowrap; overflow: hidden; }
.log .tall { height: 15px; line-height: 15px; }
.log .note { color: #000; }
.log .last { margin-top: 4px; }

.statusbar { display: flex; height: 35px; padding: 3px 1px 0 0; }
.progress { flex: 1; margin-left: 1128px; background: #e6e6e6; border: 1px solid #bcbcbc; }
.card { width: 300px; height: 30px; margin: 1px 0 0 61px; padding-top: 2px; background: #d0d0d0; border: 2px solid #7c7c7c; font: 15px/24px "Liberation Mono", monospace; }

.watermark { position: absolute; right: 68px; bottom: 55px; display: flex; gap: 28px; color: #fff; font: 74px/110px "Noto Sans CJK SC", sans-serif; text-shadow: 6px 5px 0 rgba(0, 0, 0, .3); white-space: nowrap; pointer-events: none; }
.watermark b { font-size: 78px; }
```
FILE: scene.js
```js
// Seeded generator, so that the sampled points stay put between reloads.
let seed = 20000;
function rnd() {
  seed = (seed * 1664525 + 1013904223) % 4294967296;
  return seed / 4294967296;
}
const NS = "http://www.w3.org/2000/svg";

// Facet shades along the drum, from its dark left end to its darker right end.
const keys = [[0, 118], [0.08, 142], [0.2, 165], [0.32, 190], [0.45, 210], [0.6, 216], [0.75, 214], [0.85, 204], [0.92, 190], [0.97, 165], [1, 125]];
function shade(t) {
  for (let i = 1; i < keys.length; i++) {
    if (t <= keys[i][0]) {
      const a = keys[i - 1], b = keys[i];
      return a[1] + (b[1] - a[1]) * (t - a[0]) / (b[0] - a[0]);
    }
  }
  return 125;
}
const facets = document.getElementById("facets");
const N = 30;
for (let i = 0; i < N; i++) {
  const v = Math.round(shade((i + 0.5) / N)) + (i % 2 ? 2 : -2);
  for (const o of [i / N, (i + 1) / N]) {
    const s = document.createElementNS(NS, "stop");
    s.setAttribute("offset", o);
    s.setAttribute("stop-color", `rgb(${v},${v},${v - 1})`);
    facets.append(s);
  }
}

const bright = ["#ffff45", "#faf440", "#f0e43c"];
const mid = ["#e6d83c", "#d3c238", "#c4b440"];
const dull = ["#8d8436", "#a59a3c", "#6e682c"];
const areas = {
  side: { box: [80, 390, 620, 670], n: 2200, pick: () => dull },
  plate: { box: [80, 84, 584, 606], n: 1700, pick: (x, y) => Math.abs(x - 340) + Math.abs(y - 380) < 270 ? (rnd() < 0.7 ? mid : bright) : dull },
  floor: { box: [207, 217, 358, 365], n: 1100, pick: () => rnd() < 0.8 ? bright : mid },
  inner: { box: [400, 690, 810, 810], n: 4200, pick: () => rnd() < 0.75 ? mid : dull },
  drum: { box: [408, 290, 1085, 1204], n: 5800, pick: (x, y) => {
    const t = (0.79 * x + 0.613 * y - 744) / 1121;
    const upper = y < 0.95 * x - 380;
    if (t < 0.13) return rnd() < 0.6 ? dull : mid;
    if (t > 0.95) return rnd() < 0.5 ? dull : mid;
    if (upper || t < 0.28) return mid;
    return rnd() < 0.8 ? bright : mid;
  } }
};
for (const [name, a] of Object.entries(areas)) {
  const host = document.querySelector(`[data-scatter="${name}"]`);
  const paths = {};
  const [x0, y0, w, h] = a.box;
  for (let i = 0; i < a.n; i++) {
    const x = Math.round(x0 + rnd() * w), y = Math.round(y0 + rnd() * h);
    const set = a.pick(x, y);
    const c = set[Math.floor(rnd() * 3)];
    const dw = rnd() < 0.5 ? 4 : 7, dh = rnd() < 0.5 ? 5 : 9;
    paths[c] = (paths[c] || "") + `M${x} ${y}h${dw}l-2 ${dh}h${2 - dw}z`;
  }
  for (const c in paths) {
    const p = document.createElementNS(NS, "path");
    p.setAttribute("d", paths[c]);
    p.setAttribute("fill", c);
    host.append(p);
  }
}
```
